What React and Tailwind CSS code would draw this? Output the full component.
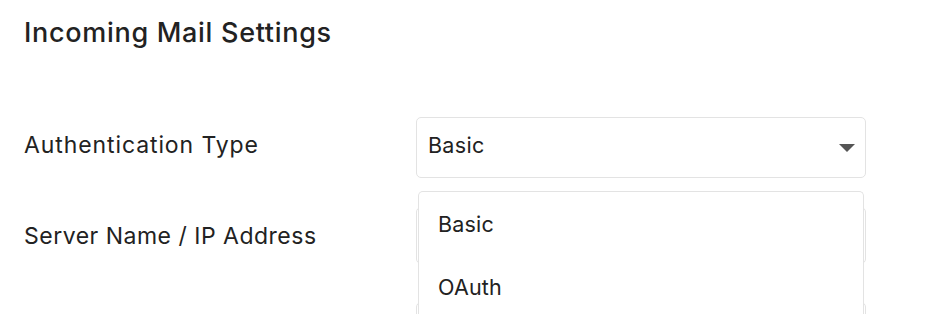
export default function App() {
  const font = { fontFamily: "Inter, 'Noto Sans', sans-serif" };
  return (
    <div className="w-[942px] h-[314px] overflow-hidden bg-white text-[#222222]" style={font}>
      <div className="pl-6 pt-[16px]">
        <h1 className="text-[27px] leading-[34px] font-medium tracking-[0.7px]">Incoming Mail Settings</h1>
        <div className="mt-[67px] flex flex-col">
          <div className="flex items-center">
            <div className="w-[392px] text-[23px] leading-[30px] tracking-[0.9px] pb-[6px]">Authentication Type</div>
            <div className="relative w-[450px]">
              <div className="h-[61px] border border-[#e3e3e3] rounded-[5px] flex items-center justify-between pl-[11px] pr-[8px] text-[21.5px] tracking-[0.3px]">
                <span className="pb-[4px]">Basic</span>
                <svg width="18" height="10" viewBox="0 0 18 10" className="mr-[1px]">
                  <path d="M1 1 L17 1 L9 9 Z" fill="#555555" />
                </svg>
              </div>
              <div className="absolute left-[2px] right-[2px] top-[74px] z-10 bg-white border border-[#e3e3e3] border-b-0 rounded-t-[5px] text-[21.5px] tracking-[0.2px]">
                <div className="h-[63px] flex items-center pl-[19px] pt-[1px]">Basic</div>
                <div className="h-[63px] flex items-center pl-[19px] pt-[1px]">OAuth</div>
              </div>
            </div>
          </div>
          <div className="flex items-center mt-[29px]">
            <div className="w-[392px] text-[23px] leading-[30px] tracking-[0.5px]">Server Name / IP Address</div>
            <div className="w-[450px] h-[57px] border border-[#e3e3e3] rounded-[5px]"></div>
          </div>
          <div className="flex items-center mt-[38px]">
            <div className="w-[392px] text-[23px] leading-[30px]">&nbsp;</div>
            <div className="w-[450px] h-[57px] border border-[#e3e3e3] rounded-[5px]"></div>
          </div>
        </div>
      </div>
    </div>
  );
}
